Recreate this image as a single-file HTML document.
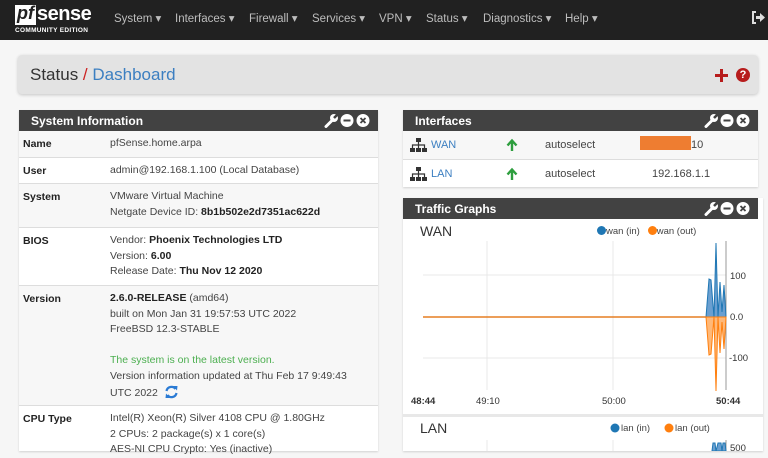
<!DOCTYPE html>
<html><head><meta charset="utf-8"><style>
*{box-sizing:border-box;margin:0;padding:0}
body{width:768px;height:451px;overflow:hidden;background:#f6f6f6;font-family:"Liberation Sans",sans-serif;font-size:11px;color:#333;position:relative}
.nav{position:absolute;left:0;top:0;width:768px;height:40px;background:#212121}
.nav .m{position:absolute;top:11px;color:#bdbdbd;font-size:11.5px}
.crumb{position:absolute;left:18px;top:55px;width:740px;height:39px;background:#e3e3e3;border-radius:4px;box-shadow:0 1px 3px rgba(0,0,0,.2)}
.panel{position:absolute;background:#fff;box-shadow:0 1px 2px rgba(0,0,0,.15)}
.ph{height:21px;background:#424242;color:#fff;font-weight:bold;font-size:12px;padding:4px 0 0 12px;position:relative}
.icons{position:absolute;right:8px;top:3px;height:15px}
.row{position:absolute;left:0;width:100%;border-top:1px solid #ddd}
.lab{position:absolute;left:4px;top:7px;font-weight:bold;font-size:10.5px;color:#222}
.val{position:absolute;left:91px;top:5px;line-height:15.6px;color:#444;font-size:10.5px}
b{color:#222}
</style></head><body>
<div class="nav">
 <div style="position:absolute;left:15px;top:5px;width:21px;height:20px;background:#fff"></div>
 <div style="position:absolute;left:17px;top:3px;font:italic bold 18px 'Liberation Sans';color:#212121">pf</div>
 <div style="position:absolute;left:37px;top:3px;font:bold 20px 'Liberation Sans';color:#fff;letter-spacing:-0.5px">sense</div>
 <div style="position:absolute;left:15px;top:27px;font:bold 6.5px 'Liberation Sans';color:#fff;letter-spacing:.3px">COMMUNITY EDITION</div>
 <div class="m" style="left:114px">System ▾</div>
 <div class="m" style="left:175px">Interfaces ▾</div>
 <div class="m" style="left:249px">Firewall ▾</div>
 <div class="m" style="left:312px">Services ▾</div>
 <div class="m" style="left:379px">VPN ▾</div>
 <div class="m" style="left:426px">Status ▾</div>
 <div class="m" style="left:483px">Diagnostics ▾</div>
 <div class="m" style="left:565px">Help ▾</div>
 <svg style="position:absolute;left:751px;top:11px" width="14" height="13" viewBox="0 0 14 13"><path d="M5 1H2v11h3" stroke="#ddd" stroke-width="2" fill="none"/><path d="M5 5h4V2l5 4.5-5 4.5V8H5z" fill="#ddd"/></svg>
</div>
<div class="crumb">
 <div style="position:absolute;left:12px;top:10px;font-size:17px;color:#333">Status <span style="color:#c22">/</span> <span style="color:#3c7fc1">Dashboard</span></div>
 <svg style="position:absolute;left:697px;top:14px" width="13" height="13"><path d="M6.5 0v13M0 6.5h13" stroke="#b71c1c" stroke-width="3"/></svg>
 <div style="position:absolute;left:718px;top:13px;width:14px;height:14px;border-radius:50%;background:#b71c1c;color:#fff;font:bold 11px 'Liberation Sans';text-align:center;line-height:14px">?</div>
</div>

<svg width="0" height="0" style="position:absolute"><defs>
<g id="ic"><path d="M2 13.5l6.5-6.5" stroke="#fff" stroke-width="3" stroke-linecap="round"/><circle cx="10" cy="5" r="4" fill="#fff"/><path d="M10 5l4-4" stroke="#424242" stroke-width="2.6"/><circle cx="23" cy="7.5" r="6.5" fill="#fff"/><rect x="19.5" y="6.5" width="7" height="2" fill="#424242"/><circle cx="39" cy="7.5" r="6.5" fill="#fff"/><path d="M36.5 5l5 5M41.5 5l-5 5" stroke="#424242" stroke-width="1.8"/></g>
<g id="net"><rect x="6" y="0" width="5" height="4" fill="#333"/><path d="M8.5 4v3M2.5 10V7h12v3M8.5 7v3" stroke="#333" stroke-width="1.2" fill="none"/><rect x="0" y="10" width="5" height="4" fill="#333"/><rect x="6" y="10" width="5" height="4" fill="#333"/><rect x="12" y="10" width="5" height="4" fill="#333"/></g>
<g id="up"><path d="M6 13V3M1.5 7.5L6 2.5l4.5 5" stroke="#2e9e3e" stroke-width="2.4" fill="none"/></g>
</defs></svg>

<div class="panel" style="left:19px;top:110px;width:359px;height:341px">
 <div class="ph">System Information<svg class="icons" width="46" height="15"><use href="#ic"/></svg></div>
 <div class="row" style="top:21px;height:26px;background:#f7f7f7;border-top:none"><div class="lab">Name</div><div class="val">pfSense.home.arpa</div></div>
 <div class="row" style="top:47px;height:26px"><div class="lab">User</div><div class="val">admin@192.168.1.100 (Local Database)</div></div>
 <div class="row" style="top:73px;height:44px;background:#f7f7f7"><div class="lab">System</div><div class="val">VMware Virtual Machine<br>Netgate Device ID: <b>8b1b502e2d7351ac622d</b></div></div>
 <div class="row" style="top:117px;height:58px"><div class="lab">BIOS</div><div class="val">Vendor: <b>Phoenix Technologies LTD</b><br>Version: <b>6.00</b><br>Release Date: <b>Thu Nov 12 2020</b></div></div>
 <div class="row" style="top:175px;height:120px;background:#f7f7f7"><div class="lab">Version</div><div class="val"><b>2.6.0-RELEASE</b> (amd64)<br>built on Mon Jan 31 19:57:53 UTC 2022<br>FreeBSD 12.3-STABLE<br><br><span style="color:#4caf50">The system is on the latest version.</span><br>Version information updated at Thu Feb 17 9:49:43<br>UTC 2022 &nbsp;<svg width="15" height="14" viewBox="0 0 15 14" style="vertical-align:-3px"><path d="M2.5 6a5 5 0 0 1 9-2M12.5 8a5 5 0 0 1-9 2" stroke="#2b7bd4" stroke-width="2.2" fill="none"/><path d="M9 1l4.5 0-.5 4.5zM6 13l-4.5 0 .5-4.5z" fill="#2b7bd4"/></svg></div></div>
 <div class="row" style="top:295px;height:50px"><div class="lab">CPU Type</div><div class="val">Intel(R) Xeon(R) Silver 4108 CPU @ 1.80GHz<br>2 CPUs: 2 package(s) x 1 core(s)<br>AES-NI CPU Crypto: Yes (inactive)</div></div>
</div>

<div class="panel" style="left:403px;top:110px;width:355px;height:77px">
 <div class="ph">Interfaces<svg class="icons" width="46" height="15"><use href="#ic"/></svg></div>
 <div class="row" style="top:21px;height:28px;background:#f7f7f7;border-top:none">
  <svg style="position:absolute;left:7px;top:7px" width="17" height="14"><use href="#net"/></svg>
  <div style="position:absolute;left:28px;top:8px;color:#3c7fc1">WAN</div>
  <svg style="position:absolute;left:103px;top:7px" width="12" height="14"><use href="#up"/></svg>
  <div style="position:absolute;left:142px;top:8px;color:#444">autoselect</div>
  <div style="position:absolute;left:237px;top:5px;width:51px;height:14px;background:#ee7d31"></div>
  <div style="position:absolute;left:288px;top:8px;color:#444">10</div>
 </div>
 <div class="row" style="top:49px;height:28px">
  <svg style="position:absolute;left:7px;top:7px" width="17" height="14"><use href="#net"/></svg>
  <div style="position:absolute;left:28px;top:8px;color:#3c7fc1">LAN</div>
  <svg style="position:absolute;left:103px;top:7px" width="12" height="14"><use href="#up"/></svg>
  <div style="position:absolute;left:142px;top:8px;color:#444">autoselect</div>
  <div style="position:absolute;left:249px;top:8px;color:#444">192.168.1.1</div>
 </div>
</div>

<div class="panel" style="left:403px;top:198px;width:360px;height:253px">
 <div class="ph" style="width:355px">Traffic Graphs<svg class="icons" width="46" height="15"><use href="#ic"/></svg></div>
 <div style="position:absolute;left:17px;top:25px;font-size:14px;color:#333">WAN</div>
 <div style="position:absolute;left:194px;top:28px;font-size:9.5px;color:#444"><span style="display:inline-block;width:9px;height:9px;border-radius:50%;background:#1f77b4;vertical-align:-1px"></span>wan (in) &nbsp;&nbsp;<span style="display:inline-block;width:9px;height:9px;border-radius:50%;background:#ff7f0e;vertical-align:-1px"></span>wan (out)</div>
 <svg style="position:absolute;left:0;top:0" width="360" height="253">
  <g stroke="#e8e8e8" stroke-width="1"><line x1="20" y1="77" x2="323" y2="77"/><line x1="20" y1="160" x2="323" y2="160"/><line x1="84" y1="43" x2="84" y2="192"/><line x1="210" y1="43" x2="210" y2="192"/></g>
  <line x1="323" y1="43" x2="323" y2="192" stroke="#999"/>
  <path d="M303 119L306 81L308 82L311 119L313 45L315 119L317 84L319 114L321 87L323 119Z" fill="#6a9fd0" stroke="#1f77b4" stroke-width="1"/>
  <path d="M303 119L306 157L308 156L311 119L313 193L315 119L317 155L319 124L321 151L323 119Z" fill="#ffb877" stroke="#ff7f0e" stroke-width="1"/>
  <line x1="20" y1="119" x2="303" y2="119" stroke="#e67e22" stroke-width="1.5"/>
  <g font-family="Liberation Sans" font-size="9.5" fill="#333"><text x="327" y="81">100</text><text x="327" y="122">0.0</text><text x="326" y="163">-100</text>
  <text x="8" y="206" font-weight="bold">48:44</text><text x="73" y="206">49:10</text><text x="199" y="206">50:00</text><text x="313" y="206" font-weight="bold">50:44</text></g>
  <rect x="0" y="216" width="360" height="3" fill="#e8e8e8"/>
  <text x="17" y="235" font-family="Liberation Sans" font-size="14" fill="#333">LAN</text>
  <g font-family="Liberation Sans" font-size="9.5" fill="#444"><circle cx="212" cy="230" r="4.5" fill="#1f77b4"/><text x="218" y="233">lan (in)</text><circle cx="266" cy="230" r="4.5" fill="#ff7f0e"/><text x="272" y="233">lan (out)</text></g>
  <line x1="84" y1="242" x2="84" y2="253" stroke="#e8e8e8"/><line x1="210" y1="242" x2="210" y2="253" stroke="#e8e8e8"/>
  <line x1="323" y1="242" x2="323" y2="253" stroke="#999"/>
  <path d="M309 253L310 245L312 245L313 253L315 245L318 245L319 253L320 245L322 245L323 253Z" fill="#6a9fd0" stroke="#1f77b4"/>
  <text x="327" y="253" font-family="Liberation Sans" font-size="9.5" fill="#333">500</text>
 </svg>
</div>
</body></html>
